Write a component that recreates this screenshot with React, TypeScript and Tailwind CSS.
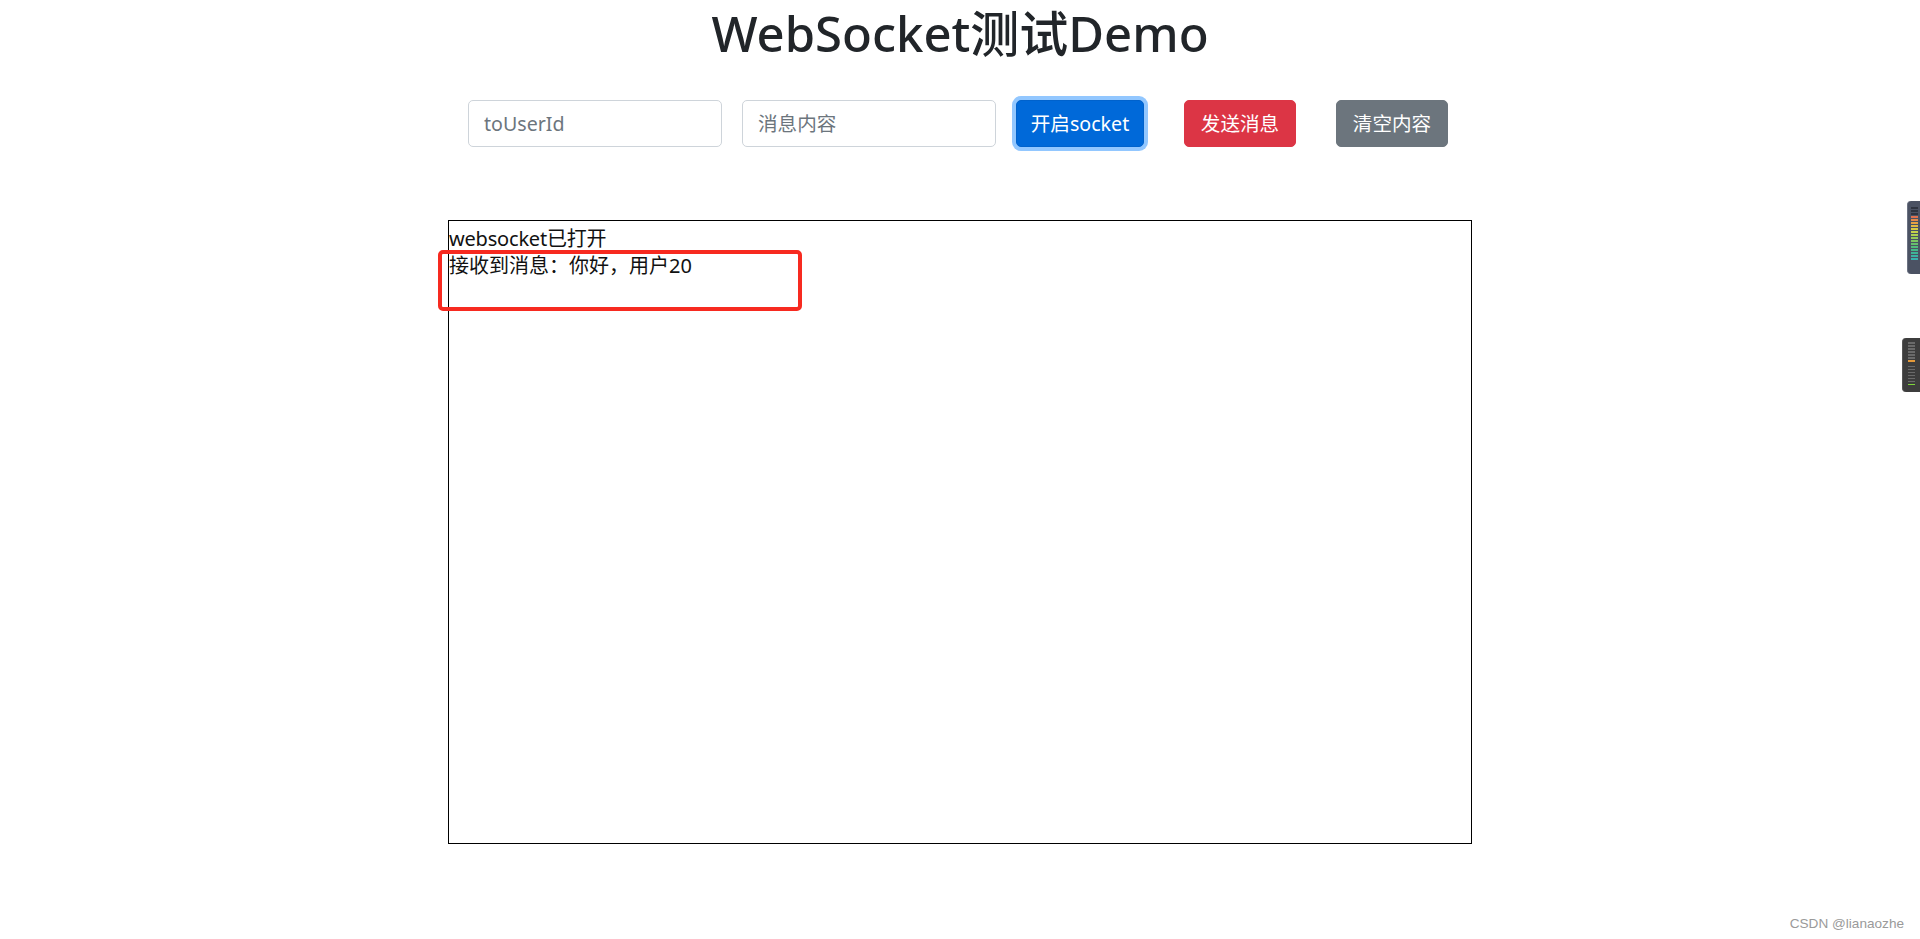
import React from "react";

const font = { fontFamily: '"Noto Sans", "Noto Sans CJK SC", sans-serif' };

const meterColors = [
  "#2f3440",
  "#2f3440",
  "#2f3440",
  "#e0714f",
  "#e4884a",
  "#e6a244",
  "#e3b941",
  "#d9cb45",
  "#c6d24a",
  "#aed150",
  "#95cc58",
  "#7dc662",
  "#66c06d",
  "#52bb7a",
  "#45b888",
  "#3fb596",
  "#3bb3a3",
  "#39b2ad",
];

function LevelMeter() {
  return (
    <div className="absolute right-0 top-[201px] w-[13px] h-[73px] rounded-l-[4px] bg-[#4b5263] border-l border-[#6b7282] flex flex-col items-end pr-[2px] pt-[6px] gap-[1px]">
      {meterColors.map((c, i) => (
        <div key={i} className="w-[7px] h-[2px]" style={{ backgroundColor: c }} />
      ))}
    </div>
  );
}

function MixerStrip() {
  const rows = [
    "#6a6a6a", "#6a6a6a", "#6a6a6a", "#6a6a6a", "#6a6a6a", "#6a6a6a",
    "#e49a3a",
    "#3d3d3d",
    "#6a6a6a", "#6a6a6a", "#6a6a6a", "#6a6a6a", "#6a6a6a", "#6a6a6a",
    "#7ed63a",
  ];
  return (
    <div className="absolute right-0 top-[338px] w-[18px] h-[54px] rounded-l-[4px] bg-[#3d3d3d] border-l border-[#555555] flex flex-col items-center pt-[4px] gap-[1.4px]">
      {rows.map((c, i) => (
        <div key={i} className="w-[7px] h-[1.6px]" style={{ backgroundColor: c }} />
      ))}
    </div>
  );
}

export default function App() {
  return (
    <div className="relative w-full h-[939px] overflow-hidden bg-white text-[#212529]" style={font}>
      <h1 className="text-center text-[49px] leading-[67px] font-medium text-[#212529]">
        WebSocket测试Demo
      </h1>

      <div className="mt-[33px] flex justify-center pr-[4px]">
        <input
          placeholder="toUserId"
          className="w-[254px] h-[47px] px-[15px] border border-[#ced4da] rounded-[5px] text-[19.6px] text-[#495057] placeholder:text-[#6c757d] outline-none"
        />
        <input
          placeholder="消息内容"
          className="ml-[20px] w-[254px] h-[47px] px-[15px] border border-[#ced4da] rounded-[5px] text-[19.6px] text-[#495057] placeholder:text-[#6c757d] outline-none"
        />
        <button className="ml-[20px] w-[128px] h-[47px] rounded-[5px] bg-[#0069d9] border border-[#0062cc] text-white text-[19.6px] shadow-[0_0_0_4px_rgba(38,143,255,0.5)]">
          开启socket
        </button>
        <button className="ml-[40px] w-[112px] h-[47px] rounded-[5px] bg-[#dc3545] border border-[#dc3545] text-white text-[19.6px]">
          发送消息
        </button>
        <button className="ml-[40px] w-[112px] h-[47px] rounded-[5px] bg-[#6c757d] border border-[#6c757d] text-white text-[19.6px]">
          清空内容
        </button>
      </div>

      <div className="relative mx-auto mt-[73px] w-[1024px] h-[624px] border border-black pt-[4px] text-[20px] leading-[27px] text-[#111111]">
        <div className="tracking-[-0.2px]">websocket已打开</div>
        <div>接收到消息：你好，用户20</div>
        <div className="absolute left-[-11px] top-[29px] w-[364px] h-[61px] border-[4px] border-[#f72a20] rounded-[5px]" />
      </div>

      <LevelMeter />
      <MixerStrip />

      <div
        className="absolute right-[16px] top-[916px] text-[13.6px] leading-[15px] text-[#9a9a9a]"
        style={{ fontFamily: '"Liberation Sans", Arial, sans-serif' }}
      >
        CSDN @lianaozhe
      </div>
    </div>
  );
}
